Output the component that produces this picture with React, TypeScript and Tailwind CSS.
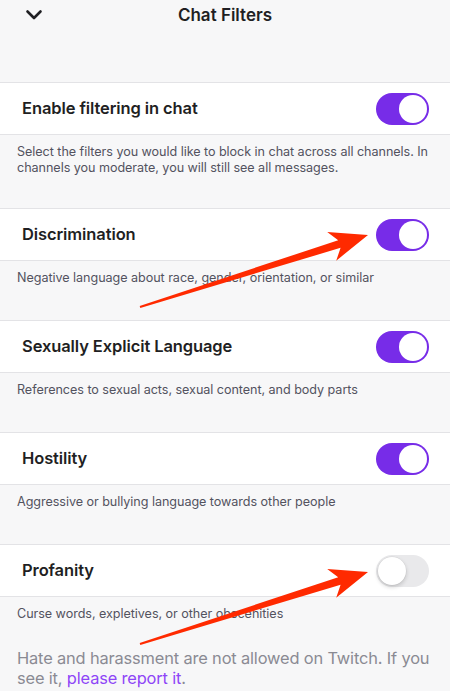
import React from "react";

type Filter = { title: string; desc: string; on: boolean };

const filters: Filter[] = [
  { title: "Discrimination", desc: "Negative language about race, gender, orientation, or similar", on: true },
  { title: "Sexually Explicit Language", desc: "References to sexual acts, sexual content, and body parts", on: true },
  { title: "Hostility", desc: "Aggressive or bullying language towards other people", on: true },
  { title: "Profanity", desc: "Curse words, expletives, or other obscenities", on: false },
];

function Toggle({ on }: { on: boolean }) {
  return on ? (
    <div className="w-[53px] h-[32px] rounded-full bg-[#772ce8] flex items-center justify-end p-[2px]">
      <div className="w-[28px] h-[28px] rounded-full bg-white" />
    </div>
  ) : (
    <div className="w-[53px] h-[32px] rounded-full bg-[#e9e9eb] flex items-center justify-start p-[2px]">
      <div className="w-[28px] h-[28px] rounded-full bg-white shadow-[0_2px_4px_rgba(0,0,0,0.18),0_0_0_0.5px_rgba(0,0,0,0.06)]" />
    </div>
  );
}

function Row({ title, on }: { title: string; on: boolean }) {
  return (
    <div className="h-[53px] bg-white border-y border-[#e3e3e6] flex items-center justify-between pl-[22px] pr-[21px]">
      <span className="text-[16.5px] font-semibold text-[#1f1f23] tracking-[-0.1px]">{title}</span>
      <Toggle on={on} />
    </div>
  );
}

function Arrow({ dy }: { dy: number }) {
  return (
    <polygon
      transform={`translate(0 ${dy})`}
      fill="#ff2a00"
      points="139.7,306 338.2,240.2 327.2,232.1 368,235 336.2,260.7 340.6,247.8 140.3,308"
    />
  );
}

const descClass = "px-[17px] pt-[9px] text-[12.6px] leading-[16px] tracking-[-0.05px] text-[#53535f]";

export default function App() {
  return (
    <div
      className="relative w-[450px] h-[691px] overflow-hidden bg-[#f7f7f8]"
      style={{ fontFamily: "Inter, 'Noto Sans', sans-serif" }}
    >
      <header className="h-[82px] relative">
        <div className="h-[32px] flex items-center justify-center relative">
          <svg
            className="absolute left-[25px] top-[9px]"
            width="18"
            height="12"
            viewBox="0 0 18 12"
            fill="none"
            stroke="#1f1f23"
            strokeWidth="2.6"
            strokeLinecap="round"
            strokeLinejoin="round"
          >
            <path d="M2.5 2.5 L9 9 L15.5 2.5" />
          </svg>
          <span className="text-[17px] font-semibold text-[#1f1f23]">Chat Filters</span>
        </div>
      </header>

      <Row title="Enable filtering in chat" on={true} />
      <div className={`h-[73px] ${descClass}`}>
        Select the filters you would like to block in chat across all channels. In channels you moderate, you will still see all messages.
      </div>

      {filters.map((f, i) => (
        <div key={f.title}>
          <Row title={f.title} on={f.on} />
          <div className={i === filters.length - 1 ? descClass : `h-[59px] ${descClass}`}>{f.desc}</div>
        </div>
      ))}

      <p className="px-[17px] pt-[26px] text-[16.4px] leading-[20px] tracking-[-0.15px] text-[#8a8a93]">
        Hate and harassment are not allowed on Twitch. If you see it,{" "}
        <span className="text-[#8e45f7]">please report it</span>.
      </p>

      <svg className="absolute inset-0 pointer-events-none" width="450" height="691" viewBox="0 0 450 691">
        <Arrow dy={0} />
        <Arrow dy={337} />
      </svg>
    </div>
  );
}
